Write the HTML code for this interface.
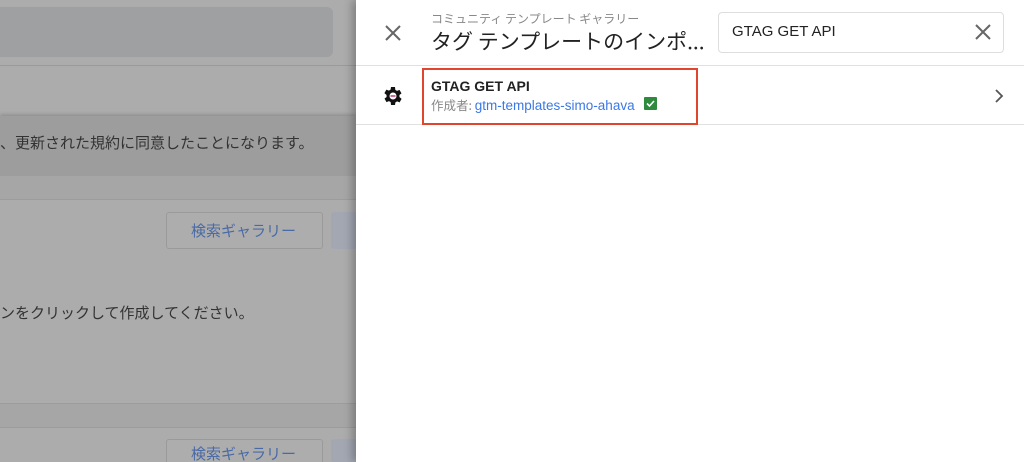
<!DOCTYPE html>
<html style="overflow:hidden;height:462px"><head><meta charset="utf-8"><style>
*{margin:0;padding:0;box-sizing:border-box}
body{width:1024px;height:462px;overflow:hidden;position:relative;background:#acacac;font-family:"Liberation Sans","Noto Sans CJK JP",sans-serif}
.a{position:absolute}
.jp{font-family:"Noto Sans CJK JP",sans-serif}
</style></head><body>
<div class="a" style="left:0;top:0;width:356px;height:462px;background:#acacac;overflow:hidden">
<div class="a" style="left:-10px;top:7px;width:343px;height:50px;background:#9fa0a2;border-radius:6px"></div>
<div class="a" style="left:0;top:65px;width:356px;height:1px;background:#9a9a9a"></div>
<div class="a" style="left:0;top:116px;width:356px;height:60px;background:#9d9d9d;box-shadow:0 -2px 3px rgba(0,0,0,.15)"></div>
<div class="a jp" style="left:0;top:132px;font-size:15px;color:#333;white-space:nowrap">、更新された規約に同意したことになります。</div>
<div class="a" style="left:0;top:176px;width:356px;height:24px;background:#a6a6a6;border-bottom:1px solid #9c9c9c"></div>
<div class="a" style="left:166px;top:212px;width:157px;height:37px;border:1px solid #9a9a9a;border-radius:3px;background:#adadad"></div>
<div class="a jp" style="left:191px;top:220px;font-size:15px;color:#4a6aa6;white-space:nowrap">検索ギャラリー</div>
<div class="a" style="left:331px;top:212px;width:30px;height:37px;background:#a2a7b2;border-radius:3px"></div>
<div class="a jp" style="left:0;top:302px;font-size:15px;color:#333;white-space:nowrap">ンをクリックして作成してください。</div>
<div class="a" style="left:0;top:403px;width:356px;height:25px;background:#a6a6a6;border-top:1px solid #9c9c9c;border-bottom:1px solid #9c9c9c"></div>
<div class="a" style="left:166px;top:439px;width:157px;height:37px;border:1px solid #9a9a9a;border-radius:3px;background:#adadad"></div>
<div class="a jp" style="left:191px;top:443px;font-size:15px;color:#4a6aa6;white-space:nowrap">検索ギャラリー</div>
<div class="a" style="left:331px;top:439px;width:30px;height:23px;background:#a2a7b2;border-radius:3px"></div>
</div>
<div class="a" style="left:356px;top:0;width:668px;height:462px;background:#fff;box-shadow:-4px 0 8px rgba(0,0,0,.25)"></div>
<svg class="a" style="left:384px;top:24px" width="18" height="18" viewBox="0 0 18 18"><path d="M2 2L16 16M16 2L2 16" stroke="#666" stroke-width="2"/></svg>
<div class="a jp" style="left:431px;top:10px;font-size:12px;color:#888;white-space:nowrap">コミュニティ テンプレート ギャラリー</div>
<div class="a jp" style="left:431px;top:26px;font-size:21px;color:#222;white-space:nowrap">タグ テンプレートのインポ...</div>
<div class="a" style="left:718px;top:12px;width:286px;height:41px;border:1px solid #ddd;border-radius:4px"></div>
<div class="a" style="left:732px;top:23px;font-size:15px;color:#222">GTAG GET API</div>
<svg class="a" style="left:975px;top:24px" width="16" height="16" viewBox="0 0 16 16"><path d="M1 1L15 15M15 1L1 15" stroke="#666" stroke-width="2"/></svg>
<div class="a" style="left:356px;top:65px;width:668px;height:1px;background:#e0e0e0"></div>
<div class="a" style="left:356px;top:124px;width:668px;height:1px;background:#e0e0e0"></div>
<svg class="a" style="left:381px;top:84px" width="24" height="24" viewBox="0 0 24 24"><path fill="#111" d="M19.4 13a7.5 7.5 0 000-2l2.1-1.6-2-3.5-2.5 1a7.3 7.3 0 00-1.7-1L15 3h-4l-.4 2.6a7.3 7.3 0 00-1.7 1l-2.5-1-2 3.5L6.6 11a7.5 7.5 0 000 2l-2.1 1.6 2 3.5 2.5-1a7.3 7.3 0 001.7 1L11 21h4l.4-2.6a7.3 7.3 0 001.7-1l2.5 1 2-3.5zM13 15.5a3.5 3.5 0 110-7 3.5 3.5 0 010 7z" transform="translate(-1 0)"/><rect x="9.5" y="11.3" width="5" height="1.4" fill="#c03070"/></svg>
<div class="a" style="left:422px;top:68px;width:276px;height:57px;border:2px solid #e0452d"></div>
<div class="a" style="left:431px;top:78px;font-size:14px;font-weight:bold;color:#222">GTAG GET API</div>
<div class="a jp" style="left:431px;top:95px;font-size:12.5px;color:#888;white-space:nowrap">作成者: <span style="color:#3b78e7;font-family:'Liberation Sans',sans-serif;font-size:13.5px">gtm-templates-simo-ahava</span></div>
<div class="a" style="left:644px;top:97px;width:13px;height:13px;background:#2e8b3e;border-radius:1px"></div>
<svg class="a" style="left:644px;top:97px" width="13" height="13" viewBox="0 0 13 13"><path d="M3 6.5L5.5 9L10 4" stroke="#fff" stroke-width="1.6" fill="none"/></svg>
<svg class="a" style="left:994px;top:89px" width="10" height="14" viewBox="0 0 10 14"><path d="M2 1L8 7L2 13" stroke="#555" stroke-width="1.8" fill="none"/></svg>
</body></html>
